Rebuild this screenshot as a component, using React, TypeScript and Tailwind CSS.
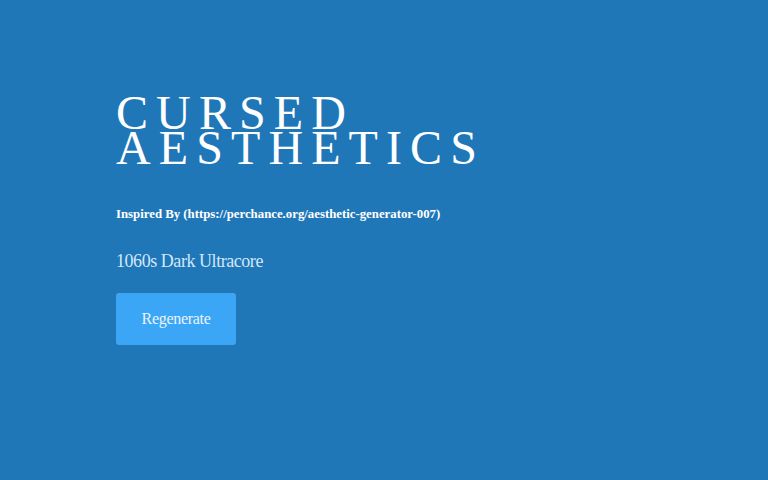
// Cursed Aesthetics - generator page
export default function App() {
  return (
    <div className="min-h-[480px] w-full bg-[#1f77b8] pl-[116px] pt-[95px] font-['Liberation_Serif',serif] text-white">
      {/* Título */}
      <h1 className="w-[420px] text-[48px] leading-[35px] tracking-[8.1px] font-normal uppercase">
        Cursed Aesthetics
      </h1>

      {/* Crédito */}
      <p className="mt-[41px] text-[12.8px] leading-[16px] font-bold">
        Inspired By (https://perchance.org/aesthetic-generator-007)
      </p>

      {/* Resultado */}
      <p className="mt-[29px] text-[18px] leading-[20px] tracking-[-0.45px] text-[#d3e8f8]">
        1060s Dark Ultracore
      </p>

      {/* Botón */}
      <button
        type="button"
        className="mt-[22px] flex h-[52px] w-[120px] items-center justify-center rounded-[3px] bg-[#3ba6f6] text-[16px] text-[#eaf4fd] tracking-[-0.3px]"
      >
        Regenerate
      </button>
    </div>
  );
}
